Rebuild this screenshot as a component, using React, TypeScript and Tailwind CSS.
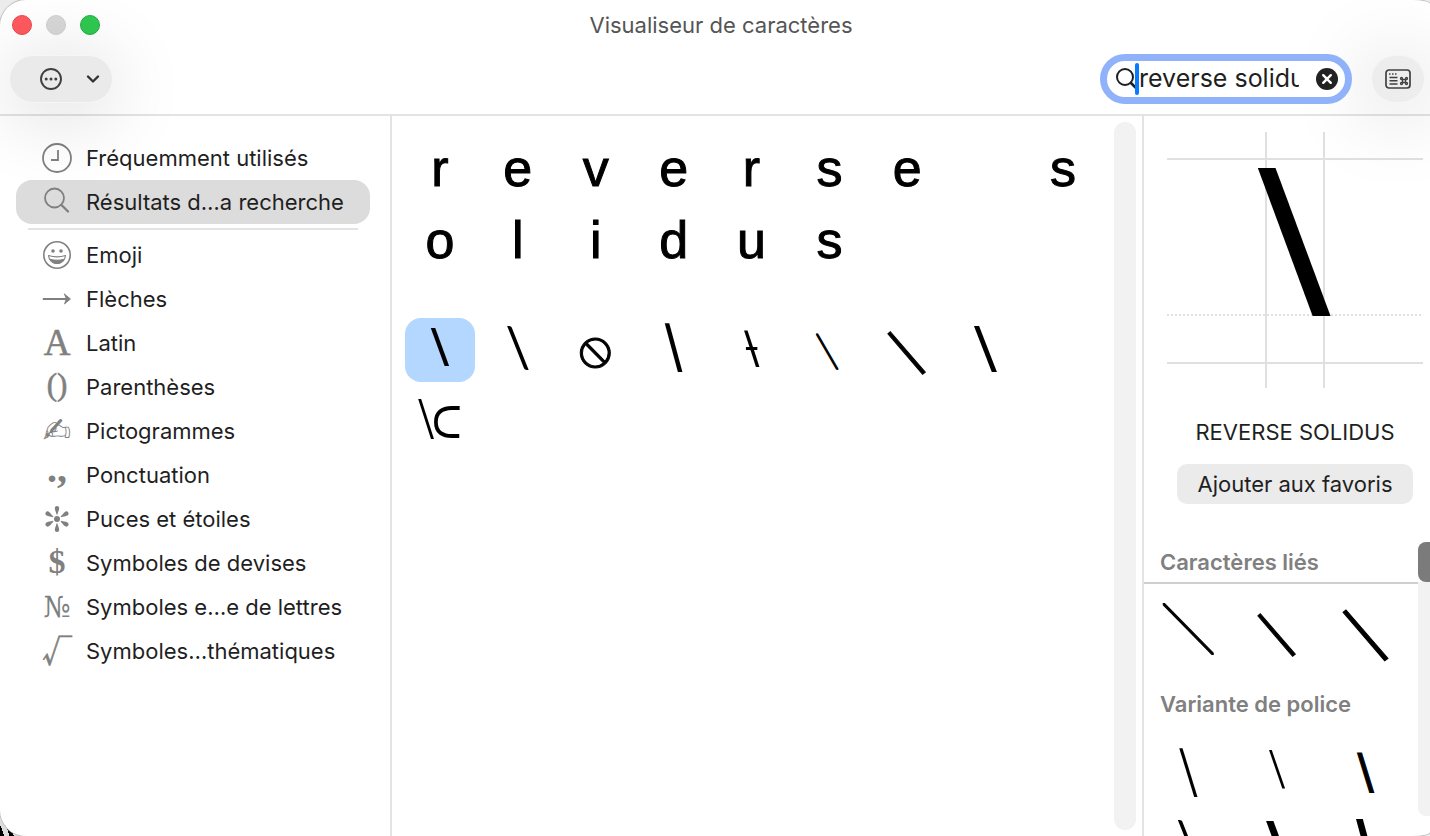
import { useState, type ChangeEvent, type ReactNode } from 'react'
import { clsx } from 'clsx'

type Category = {
  label: string
  icon: ReactNode
}

type Glyph = {
  char: string
  style: string
}

// Text icon, y is the baseline inside a 30x44 row
const TextIcon = ({
  char,
  y,
  className,
}: {
  char: string
  y: number
  className: string
}) => (
  <svg viewBox="0 0 30 44" className="h-11 w-[30px] overflow-visible" aria-hidden="true">
    <text x="15" y={y} textAnchor="middle" fill="#808080" className={className}>
      {char}
    </text>
  </svg>
)

const LineIcon = ({ children }: { children: ReactNode }) => (
  <svg
    viewBox="0 0 30 30"
    className="h-[30px] w-[30px]"
    fill="none"
    stroke="#808080"
    strokeWidth="1.8"
    strokeLinecap="round"
    strokeLinejoin="round"
    aria-hidden="true"
  >
    {children}
  </svg>
)

const RECENT: Category[] = [
  {
    label: 'Fréquemment utilisés',
    icon: (
      <LineIcon>
        <circle cx="15" cy="15" r="14" />
        <path d="M16 7v10H9" strokeLinecap="butt" strokeLinejoin="miter" />
      </LineIcon>
    ),
  },
  {
    label: 'Résultats d…a recherche',
    icon: (
      <LineIcon>
        <circle cx="12.5" cy="11" r="9.5" />
        <path d="M19.5 18l6.5 6.5" strokeWidth="2.4" />
      </LineIcon>
    ),
  },
]

const CATEGORIES: Category[] = [
  {
    label: 'Emoji',
    icon: (
      <LineIcon>
        <circle cx="15" cy="15" r="13.2" strokeWidth="1.6" />
        <circle cx="11" cy="11" r="1.8" fill="#808080" stroke="none" />
        <circle cx="19" cy="11" r="1.8" fill="#808080" stroke="none" />
        <path d="M6.5 15.5c5 1.5 12 1.5 17 0-.5 5-4 8-8.5 8s-8-3-8.5-8z" strokeWidth="1.2" />
        <path
          d="M8 19.3c4.5 1.2 9.5 1.2 14 0-1.5 2.7-4 4.2-7 4.2s-5.5-1.5-7-4.2z"
          fill="#808080"
          strokeWidth="1"
        />
      </LineIcon>
    ),
  },
  {
    label: 'Flèches',
    icon: (
      <LineIcon>
        <path d="M1.5 15H26" strokeWidth="1.8" />
        <path d="M22.5 10l6 5-6 5 1.700-5z" fill="#808080" strokeWidth=".8" />
      </LineIcon>
    ),
  },
  {
    label: 'Latin',
    icon: (
      <TextIcon
        char="A"
        y={34}
        className="font-['Liberation_Serif',serif] text-[37px] [stroke-width:0.6px] [stroke:#808080]"
      />
    ),
  },
  {
    label: 'Parenthèses',
    icon: (
      <TextIcon
        char="()"
        y={30}
        className="font-['Liberation_Serif',serif] text-[31px] [stroke-width:0.6px] [stroke:#808080]"
      />
    ),
  },
  {
    label: 'Pictogrammes',
    icon: <TextIcon char="✍" y={33} className="font-['DejaVu_Sans',sans-serif] text-[34px]" />,
  },
  {
    label: 'Ponctuation',
    icon: <TextIcon char=".," y={29} className="font-['Liberation_Serif',serif] text-[40px] font-bold" />,
  },
  {
    label: 'Puces et étoiles',
    icon: (
      <svg viewBox="-15 -15 30 30" className="h-[30px] w-[30px]" fill="#808080" aria-hidden="true">
        <circle r="3" />
        {[0, 60, 120, 180, 240, 300].map((angle) => (
          <path
            key={angle}
            d="M-.5-4.5C-.8-7-2.2-8.5-2.2-10.8c0-1.4 1-2.2 2.2-2.2s2.200.8 2.200 2.200C2.200-8.500.8-7 .5-4.500z"
            transform={`rotate(${angle})`}
          />
        ))}
      </svg>
    ),
  },
  {
    label: 'Symboles de devises',
    icon: <TextIcon char="$" y={32} className="font-['Liberation_Serif',serif] text-[34px] font-bold" />,
  },
  {
    label: 'Symboles e…e de lettres',
    icon: <TextIcon char="№" y={32} className="font-['DejaVu_Serif',serif] text-[29px]" />,
  },
  {
    label: 'Symboles…thématiques',
    icon: (
      <TextIcon
        char="√"
        y={33}
        className="font-['Noto_Sans_CJK_SC',sans-serif] text-[30px] [stroke-width:0.6px] [stroke:#808080]"
      />
    ),
  },
]

const RESULT_ROWS: Glyph[][] = [
  [
    { char: '\\', style: "font-['Noto_Sans',sans-serif] text-[52px]" },
    { char: '\\', style: "font-['Lato',sans-serif] text-[56px]" },
    { char: '\u29b8', style: "font-['DejaVu_Sans',sans-serif] text-[50px] [-webkit-text-stroke:1px_black]" },
    { char: '\\', style: "font-['Inter',sans-serif] text-[56px]" },
    { char: '\u29f7', style: "font-['DejaVu_Sans',sans-serif] text-[52px]" },
    { char: '\ufe68', style: "font-['DejaVu_Sans',sans-serif] text-[46px] [-webkit-text-stroke:1px_black]" },
    { char: '\uff3c', style: "font-['DejaVu_Sans',sans-serif] text-[50px] [-webkit-text-stroke:1px_black]" },
    { char: '\\', style: "font-['Roboto',sans-serif] text-[60px]" },
  ],
  [{ char: '\u27c8', style: "font-['DejaVu_Sans',sans-serif] text-[54px]" }],
]

const RELATED: Glyph[] = [
  { char: '\u2572', style: "font-['Noto_Sans_CJK_SC',sans-serif] text-[50px] [-webkit-text-stroke:1px_black]" },
  { char: '\uff3c', style: "font-['DejaVu_Sans',sans-serif] text-[50px] [-webkit-text-stroke:1px_black]" },
  { char: '\uff3c', style: "font-['DejaVu_Sans',sans-serif] text-[60px] [-webkit-text-stroke:1px_black]" },
]

const VARIANTS: Glyph[] = [
  { char: '\\', style: "font-['Noto_Sans_CJK_SC',sans-serif] text-[50px]" },
  { char: '\\', style: "font-['Liberation_Serif',serif] text-[58px]" },
  { char: '\\', style: "font-['DejaVu_Sans',sans-serif] text-[48px] [-webkit-text-stroke:1px_black]" },
  { char: '\\', style: "font-['Lato',sans-serif] text-[54px]" },
  { char: '\\', style: "font-['Noto_Sans',sans-serif] text-[54px] font-bold" },
  { char: '\\', style: "font-['Inter',sans-serif] text-[54px] font-bold" },
]

const CategoryRow = ({
  category,
  selected,
  onSelect,
}: {
  category: Category
  selected: boolean
  onSelect: () => void
}) => (
  <button
    type="button"
    className={clsx(
      'flex h-11 w-full items-center gap-3.5 rounded-2xl pl-[26px] text-left text-[22px] whitespace-nowrap',
      selected && 'bg-[#dcdcdc]',
    )}
    onClick={onSelect}
  >
    {category.icon}
    {category.label}
  </button>
)

const GlyphCell = ({
  glyph,
  selected,
  onSelect,
}: {
  glyph: Glyph
  selected?: boolean
  onSelect?: () => void
}) => (
  <button
    type="button"
    className={clsx(
      "flex h-16 justify-center rounded-2xl font-['Liberation_Sans',sans-serif] text-[52px] leading-[60px] text-black",
      selected && 'bg-[#b3d7ff]',
    )}
    onClick={onSelect}
  >
    <span>
      <span className={clsx('leading-none', glyph.style)}>{glyph.char}</span>
    </span>
  </button>
)

const GlyphPreview = () => (
  <svg viewBox="0 0 256 256" className="h-64 w-64" role="img" aria-label="REVERSE SOLIDUS">
    <g stroke="#e0e0e0" strokeWidth="2">
      <path d="M99 0v256M157 0v256M0 27h256M0 231h256" />
      <path d="M0 183h256" strokeDasharray="2 2" />
    </g>
    <text x="127" y="184" textAnchor="middle" className="font-['Noto_Sans',sans-serif] text-[206px]">
      {'\\'}
    </text>
  </svg>
)

export default function App() {
  const [query, setQuery] = useState('reverse solidus')
  const [category, setCategory] = useState('Résultats d…a recherche')
  const [selected, setSelected] = useState(RESULT_ROWS[0][0])

  return (
    <div className="relative h-screen overflow-hidden bg-[#ececec] font-['Inter',sans-serif] text-[#1f1f1f]">
      {/* desktop showing behind the window corner */}
      <div className="absolute bottom-0 left-0 h-4 w-6 bg-[repeating-linear-gradient(70deg,#000_0px,#000_4px,#ddd_4px,#ddd_9px)]" />

      <div className="relative flex h-full flex-col overflow-hidden rounded-l-[26px] rounded-tr-[18px_4px] rounded-br-[18px_4px] bg-white shadow-[0_0_0_1px_#c4c4c4]">
        <header className="relative z-10 h-[116px] border-b-2 border-[#e3e3e3]">
          <div className="grid h-[50px] grid-cols-[1fr_auto_1fr] items-center pl-3 text-[22px] text-[#555]">
            <div className="flex gap-3.5">
              <button type="button" aria-label="Fermer" className="size-5 rounded-full border border-[#e8484c] bg-[#ff5a5f]" />
              <button type="button" aria-label="Réduire" className="size-5 rounded-full border border-[#d0d0d0] bg-[#d8d8d8]" />
              <button type="button" aria-label="Agrandir" className="size-5 rounded-full border border-[#24ad44] bg-[#2fc951]" />
            </div>
            <h1>Visualiseur de caractères</h1>
          </div>

          <div className="flex items-center justify-between pt-1 pr-1.5 pl-2.5">
            <button
              type="button"
              aria-label="Options"
              className="flex h-[46px] w-[102px] items-center justify-between rounded-full bg-[#eaeaea] pr-3 pl-[29px] shadow-[0_0_0_1px_#f6f6f6,0_8px_80px_rgba(0,0,0,0.2)]"
            >
              <svg viewBox="0 0 24 24" className="size-6" fill="none" stroke="#404040" strokeWidth="1.9">
                <circle cx="12" cy="12" r="10" />
                <path d="M7.2 12h.01M12 12h.01M16.8 12h.01" strokeWidth="3" strokeLinecap="round" />
              </svg>
              <svg
                viewBox="0 0 14 14"
                className="size-3.5"
                fill="none"
                stroke="#333"
                strokeWidth="2.4"
                strokeLinecap="round"
                strokeLinejoin="round"
              >
                <path d="M2 4.5l5 5 5-5" />
              </svg>
            </button>

            <div className="flex items-center gap-5">
              <div className="relative flex h-[50px] w-[252px] items-center rounded-full border-[7px] border-[#8fb2fb] bg-white pr-1.5 pl-2">
                <svg
                  viewBox="0 0 24 24"
                  className="size-6 shrink-0"
                  fill="none"
                  stroke="#1f1f1f"
                  strokeWidth="2"
                  strokeLinecap="round"
                  aria-hidden="true"
                >
                  <circle cx="10" cy="10" r="8" />
                  <path d="M16 16l6 6" strokeWidth="2.6" />
                </svg>
                <input
                  type="text"
                  aria-label="Rechercher"
                  className="w-40 text-[25px] outline-none"
                  value={query}
                  onChange={(e: ChangeEvent<HTMLInputElement>) =>
                    setQuery(e.target.value)
                  }
                />
                <span className="absolute left-7 h-8 w-1 rounded-full bg-[#0a7aff]" />
                <button type="button" aria-label="Effacer" className="ml-auto" onClick={() => setQuery('')}>
                  <svg viewBox="0 0 24 24" className="size-6">
                    <circle cx="12" cy="12" r="11" fill="#222" />
                    <path
                      d="M8.2 8.2l7.6 7.6M15.8 8.2l-7.6 7.6"
                      stroke="#fff"
                      strokeWidth="2.4"
                      strokeLinecap="round"
                    />
                  </svg>
                </button>
              </div>

              <button
                type="button"
                aria-label="Clavier"
                className="flex h-[46px] w-[52px] items-center justify-center rounded-full bg-[#ededed] shadow-[0_0_0_1px_#f6f6f6,0_8px_80px_rgba(0,0,0,0.25)]"
              >
                <svg viewBox="0 0 26 20" className="h-5 w-[26px]" fill="none" stroke="#404040">
                  <rect x="1" y="1" width="24" height="18" rx="3" strokeWidth="1.7" />
                  <path d="M4 5h1.500M7 5h1.500M10 5h1.500" strokeWidth="1.5" />
                  <path d="M4.500 8.500h8M4.500 11.700h8M4.500 15h8" strokeWidth="1.5" />
                  <path
                    d="M17.500 10.500h3v3h-3zM17.500 10.500v-1a1 1 0 1 0-1 1zM20.500 10.500v-1a1 1 0 1 1 1 1zM17.500 13.500v1a1 1 0 1 1-1-1zM20.500 13.500v1a1 1 0 1 0 1-1z"
                    strokeWidth="1.3"
                  />
                </svg>
              </button>
            </div>
          </div>
        </header>

        <div className="flex min-h-0 flex-1">
          <nav className="w-[392px] shrink-0 border-r-2 border-[#e3e3e3] pt-5 pr-5 pl-4">
            {RECENT.map((item) => (
              <CategoryRow
                key={item.label}
                category={item}
                selected={item.label === category}
                onSelect={() => setCategory(item.label)}
              />
            ))}
            <hr className="mx-3 mt-1 mb-[3px] border-t-2 border-[#e3e3e3]" />
            {CATEGORIES.map((item) => (
              <CategoryRow
                key={item.label}
                category={item}
                selected={item.label === category}
                onSelect={() => setCategory(item.label)}
              />
            ))}
          </nav>

          <main className="flex min-w-0 flex-1 gap-4 pt-1.5 pr-1.5 pb-1.5 pl-[13px]">
            <div className="flex flex-1 flex-col gap-2 pt-4">
              <div className="mb-9 grid grid-cols-9 gap-2">
                {query.split('').map((char, index) => (
                  <GlyphCell
                    key={index}
                    glyph={{ char, style: '[-webkit-text-stroke:1px_black]' }}
                  />
                ))}
              </div>
              {RESULT_ROWS.map((row, rowIndex) => (
                <div key={rowIndex} className="grid grid-cols-9 gap-2">
                  {row.map((glyph, index) => (
                    <GlyphCell
                      key={index}
                      glyph={glyph}
                      selected={glyph === selected}
                      onSelect={() => setSelected(glyph)}
                    />
                  ))}
                </div>
              ))}
            </div>
            <div className="w-[22px] rounded-full bg-[#f2f2f2]" />
          </main>

          <aside className="flex w-72 shrink-0 flex-col border-l-2 border-[#e3e3e3] pt-4">
            <div className="flex flex-col items-center pl-4 text-[22px]">
              <GlyphPreview />
              <h2 className="mt-7 leading-8">REVERSE SOLIDUS</h2>
              <button type="button" className="mt-4 h-10 w-[236px] rounded-[10px] bg-[#ebebeb]">
                Ajouter aux favoris
              </button>
            </div>

            <div className="mt-9 flex min-h-0 flex-1">
              <div className="flex-1 overflow-hidden">
                <h3 className="h-11 border-b-2 border-[#cfcfcf] pl-4 text-[22px] leading-[44px] font-semibold text-[#808080]">
                  Caractères liés
                </h3>
                <div className="grid grid-cols-3 gap-y-2 pt-4 pr-2">
                  {RELATED.map((glyph, index) => (
                    <GlyphCell key={index} glyph={glyph} />
                  ))}
                </div>
                <h3 className="mt-[18px] h-11 pl-4 text-[22px] leading-[44px] font-semibold text-[#808080]">
                  Variante de police
                </h3>
                <div className="grid grid-cols-3 gap-y-2 pt-3.5 pr-2">
                  {VARIANTS.map((glyph, index) => (
                    <GlyphCell key={index} glyph={glyph} />
                  ))}
                </div>
              </div>
              <div className="flex w-3 flex-col pt-0.5 pb-5">
                <div className="h-10 rounded-l-lg bg-[#7b7b7b]" />
                <div className="flex-1 rounded-bl-lg bg-[#f2f2f2]" />
              </div>
            </div>
          </aside>
        </div>
      </div>
    </div>
  )
}
